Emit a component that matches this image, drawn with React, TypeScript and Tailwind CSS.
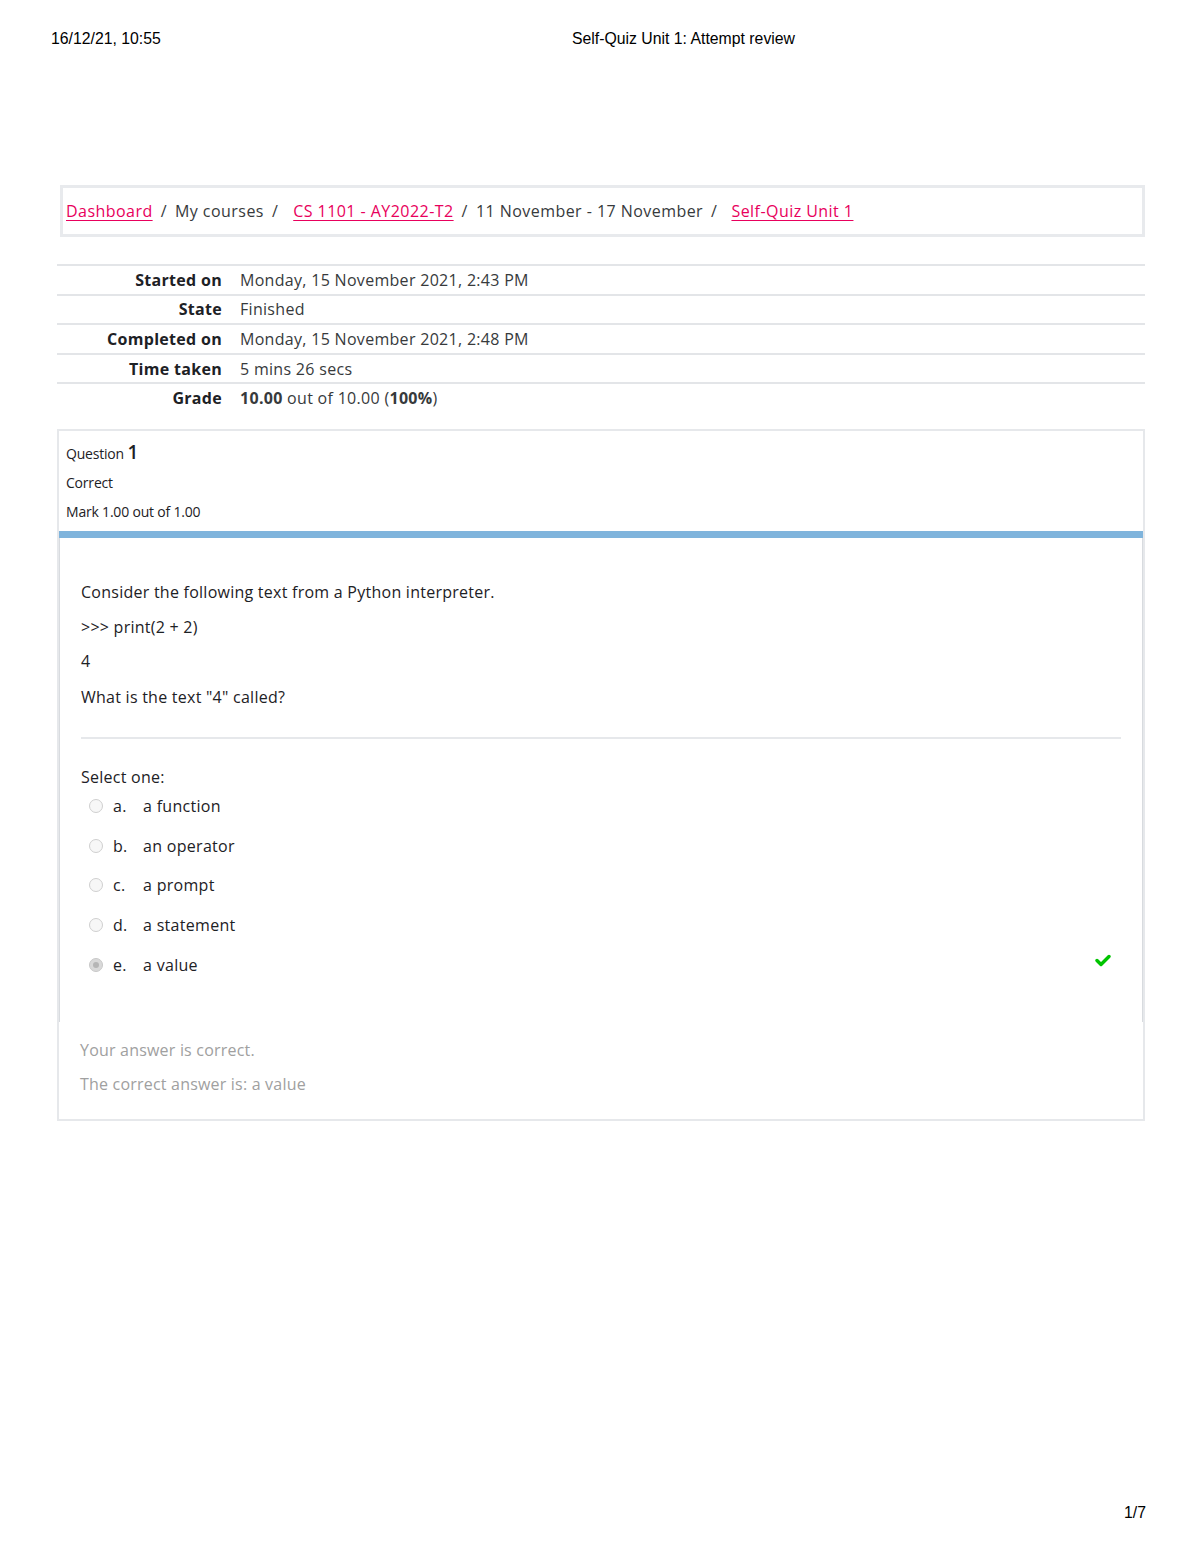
export default function App() {
  const rows = [
    { label: "Started on", value: <>Monday, 15 November 2021, 2:43 PM</> },
    { label: "State", value: <>Finished</> },
    { label: "Completed on", value: <>Monday, 15 November 2021, 2:48 PM</> },
    { label: "Time taken", value: <>5 mins 26 secs</> },
    {
      label: "Grade",
      value: (
        <>
          <b className="font-bold">10.00</b> out of 10.00 (<b className="font-bold">100%</b>)
        </>
      ),
    },
  ];

  const options = [
    { key: "a.", text: "a function", checked: false },
    { key: "b.", text: "an operator", checked: false },
    { key: "c.", text: "a prompt", checked: false },
    { key: "d.", text: "a statement", checked: false },
    { key: "e.", text: "a value", checked: true },
  ];

  return (
    <div className="flex h-[1553px] flex-col bg-white text-[#1d2125] font-['Open_Sans',sans-serif]">
      {/* Print header */}
      <header className="flex px-[51px] pt-[30px] font-['Liberation_Sans',Arial,sans-serif] text-[15.8px] leading-[18px] text-black">
        <div className="w-[521px]">16/12/21, 10:55</div>
        <div>Self-Quiz Unit 1: Attempt review</div>
      </header>

      <main className="ml-[57px] mr-[55px] mt-[137px]">
        {/* Breadcrumb */}
        <nav className="ml-[3px] flex h-[52px] items-center border-[3px] border-[#e8eaed] px-[3px] text-[16px] tracking-[0.45px] text-[#373a3c]">
          <a className="text-[#e8005c] underline underline-offset-[3px]">Dashboard</a>
          <span className="mx-[8px]">/</span>
          <span>My courses</span>
          <span className="mx-[8px]">/</span>
          <a className="ml-[7px] text-[#e8005c] underline underline-offset-[3px]">CS 1101 - AY2022-T2</a>
          <span className="mx-[8px]">/</span>
          <span>11 November - 17 November</span>
          <span className="mx-[8px] mr-[14px]">/</span>
          <a className="text-[#e8005c] underline underline-offset-[3px]">Self-Quiz Unit 1</a>
        </nav>

        {/* Summary table */}
        <div className="mt-[27px] text-[16px] tracking-[0.3px]">
          {rows.map((r) => (
            <div key={r.label} className="flex h-[29.6px] items-center border-t-2 border-[#e3e5e8]">
              <div className="w-[175px] pr-[10px] text-right font-bold text-[#1d2125]">{r.label}</div>
              <div className="pl-[8px] text-[#373a3c]">{r.value}</div>
            </div>
          ))}
        </div>

        {/* Question card */}
        <section className="mt-[17px] border-2 border-[#e6e8eb]">
          <div className="px-[7px] pt-[7px] pb-[5px] text-[14px] leading-[29px] tracking-[-0.2px] text-[#1d2125]">
            <div>
              Question <span className="text-[19px] font-semibold">1</span>
            </div>
            <div>Correct</div>
            <div>Mark 1.00 out of 1.00</div>
          </div>
          <div className="h-[7px] bg-[#7fb4dc]" />

          <div className="border-x border-[#d8dbdf] px-[21px] pt-[42px] pb-[38px] text-[16px] tracking-[0.25px]">
            <div className="leading-[24px]">
              <p>Consider the following text from a Python interpreter.</p>
              <p className="mt-[11px]">&gt;&gt;&gt; print(2 + 2)</p>
              <p className="mt-[10px]">4</p>
              <p className="mt-[12px]">What is the text "4" called?</p>
            </div>
            <hr className="mt-[28px] border-t-2 border-[#e6e8eb]" />

            <div className="mt-[29px] leading-[18px]">Select one:</div>
            <div>
              {options.map((o) => (
                <div key={o.key} className="flex h-[39.7px] items-center">
                  <span
                    className={`ml-[8px] flex h-[14px] w-[14px] items-center justify-center rounded-full border ${
                      o.checked ? "border-[#c8c8c8] bg-[#d9d9d9]" : "border-[#cfcfcf] bg-[#f7f7f7]"
                    }`}
                  >
                    {o.checked && <span className="h-[6px] w-[6px] rounded-full bg-[#b5b5b5]" />}
                  </span>
                  <span className="ml-[10px] w-[30px]">{o.key}</span>
                  <span className="tracking-[0.3px]">{o.text}</span>
                  {o.checked && (
                    <svg className="ml-auto mr-[10px] -mt-[8px]" width="16" height="13" viewBox="0 0 16 13">
                      <path d="M2 6.5 L6 10.5 L14 2.5" fill="none" stroke="#00c400" strokeWidth="3.4" strokeLinecap="round" strokeLinejoin="round" />
                    </svg>
                  )}
                </div>
              ))}
            </div>
          </div>

          <div className="px-[21px] pt-[16px] pb-[23px] text-[16px] leading-[24px] tracking-[0.2px] text-[#a0a0a0]">
            <p>Your answer is correct.</p>
            <p className="mt-[10px]">The correct answer is: a value</p>
          </div>
        </section>
      </main>

      {/* Print footer */}
      <footer className="mt-auto flex justify-end pb-[31px] pr-[54px] font-['Liberation_Sans',Arial,sans-serif] text-[15.8px] leading-[18px] text-black">
        1/7
      </footer>
    </div>
  );
}
